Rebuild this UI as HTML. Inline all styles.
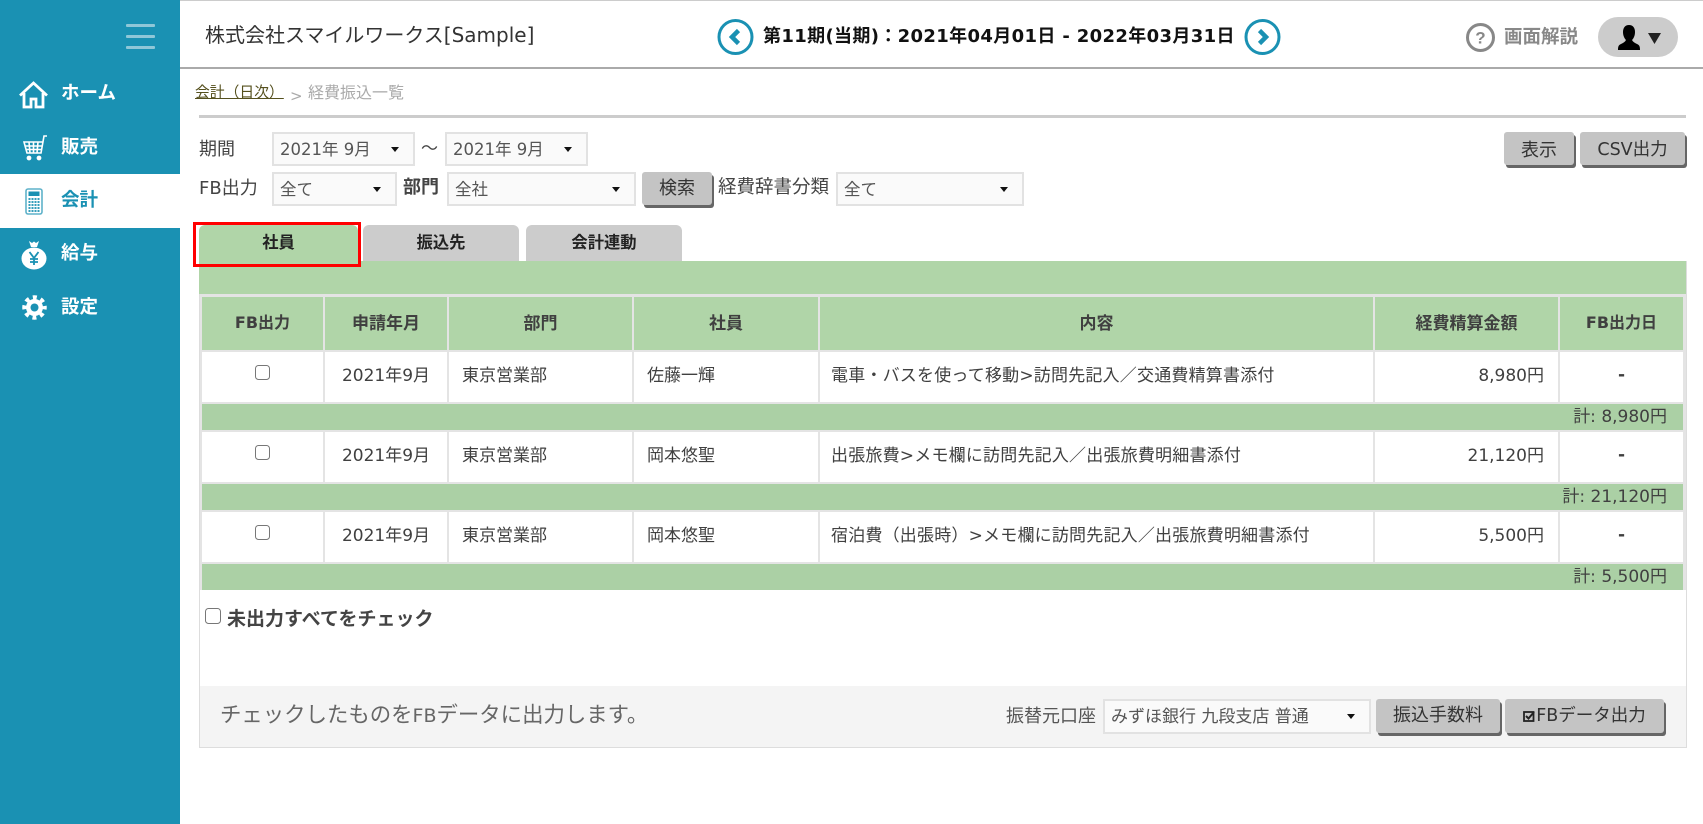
<!DOCTYPE html>
<html lang="ja"><head><meta charset="utf-8"><title>経費振込一覧</title>
<style>
*{box-sizing:border-box}
html,body{margin:0;padding:0;width:1703px;height:824px;overflow:hidden;background:#fff}
body{font-family:"DejaVu Sans","Noto Sans CJK JP",sans-serif;color:#444;position:relative;font-size:16px}
.a{position:absolute;white-space:nowrap}
.side{position:absolute;left:0;top:0;width:180px;height:824px;background:#1a91b3}
.nav{position:absolute;left:61px;font-weight:700;font-size:18.500px;line-height:26px;color:#fff}
.sel{position:absolute;background:#fafafa;border:2px solid #e2e2e2;color:#555;font-size:16.500px;padding-left:6px;white-space:nowrap;line-height:32px}
.sel:after{content:"";position:absolute;right:14px;top:13px;border:4px solid transparent;border-top:5px solid #111;border-bottom:0}
.btn{position:absolute;background:#c4c4c4;border-radius:3px;box-shadow:2px 3px 0 #666;color:#333;font-size:18px;text-align:center;white-space:nowrap;line-height:34px}
.tab{position:absolute;top:225px;height:36px;border-radius:6px 6px 0 0;background:#ccc;color:#222;font-weight:700;font-size:16.300px;text-align:center;line-height:36px}
table{border-collapse:separate;border-spacing:2px;table-layout:fixed;background:#e4e4e4;position:absolute;left:0;top:0;width:1485px}
td,th{padding:0;font-size:17px;background:#fff;color:#404040}
th{background:#b0d5a8;font-weight:700;height:53px;font-size:17px;padding-bottom:5px}
th.f{font-size:16px}
tr.r td{height:50px;padding-bottom:8px}
tr.r td.d{padding-bottom:4px}
tr.s td{height:26px;background:#abd0a5;text-align:right;padding-right:16px;font-size:17px;line-height:26px}
.c{text-align:center}.l{padding-left:13px}.lx{padding-left:11px;letter-spacing:.2px}.rt{text-align:right;padding-right:14px}
.d{font-weight:700}
.cb{display:inline-block;width:15px;height:15px;border:1.500px solid #777;border-radius:3.500px;background:#fff;vertical-align:middle}
tr.r .cb{position:relative;top:-1px}
</style></head><body>
<div class="a" style="left:0;top:0;width:1703px;height:1px;background:#ccc"></div>
<div class="side">
  <div style="position:absolute;left:126px;top:24px;width:29px;height:3px;background:#8fc7d8;border-radius:1px"></div>
  <div style="position:absolute;left:126px;top:35px;width:29px;height:3px;background:#8fc7d8;border-radius:1px"></div>
  <div style="position:absolute;left:126px;top:46px;width:29px;height:3px;background:#8fc7d8;border-radius:1px"></div>
  <div style="position:absolute;left:0;top:174px;width:180px;height:54px;background:#fff"></div>
  <div class="nav" style="top:81px">ホーム</div>
  <div class="nav" style="top:135px">販売</div>
  <div class="nav" style="top:188px;color:#1a91b3">会計</div>
  <div class="nav" style="top:241px">給与</div>
  <div class="nav" style="top:295px">設定</div>
  <svg style="position:absolute;left:18px;top:81px" width="31" height="28" viewBox="0 0 31 28" fill="none" stroke="#fff" stroke-width="2.800"><path d="M2 14.500 15.500 2 29 14.500M6 12v14h7v-8h5v8h7V12"/></svg>
  <svg style="position:absolute;left:21px;top:135px" width="27" height="26" viewBox="0 0 27 26" fill="none" stroke="#fff" stroke-width="1.600"><path d="M26 1h-3l-3 17H6L3 7h18.500M4 11h17M5 14.500h15.500M8 7l1 11M12.500 7v11M17 7l-1 11" /><circle cx="8" cy="23" r="1.600" fill="#fff"/><circle cx="18" cy="23" r="1.600" fill="#fff"/></svg>
  <svg style="position:absolute;left:25px;top:188px" width="18" height="27" viewBox="0 0 18 27"><rect x="1" y="1" width="16" height="25" rx="2" fill="#fff" stroke="#5fb2ca" stroke-width="1.600"/><rect x="3.500" y="3.500" width="11" height="4.500" fill="#1a91b3"/><path d="M3.500 11h11M3.500 14h11M3.500 17h11M3.500 20h11M3.500 23h11" stroke="#1a91b3" stroke-width="1.800" stroke-dasharray="2 1"/></svg>
  <svg style="position:absolute;left:21px;top:240px" width="26" height="30" viewBox="0 0 26 30"><path d="M8 1l3 2 2-1.500 2 1.500 3-2-2 6H10z" fill="#fff"/><ellipse cx="13" cy="18.500" rx="12.500" ry="11" fill="#fff"/><path d="M8.500 12 13 18l4.500-6M13 18v7M9 19h8M9 22h8" stroke="#1a91b3" stroke-width="1.800" fill="none"/></svg>
  <svg style="position:absolute;left:22px;top:295px" width="25" height="25" viewBox="0 0 25 25"><circle cx="12.500" cy="12.500" r="8.500" fill="#fff"/><circle cx="12.500" cy="12.500" r="10" fill="none" stroke="#fff" stroke-width="4.500" stroke-dasharray="3.930 3.930" stroke-dashoffset="2"/><circle cx="12.500" cy="12.500" r="4" fill="#1a91b3"/></svg>
</div>

<div class="a" style="left:180px;top:67px;width:1523px;height:2px;background:#aaa"></div>
<div class="a" style="left:205px;top:20px;font-size:20px;line-height:30px;color:#333">株式会社スマイルワークス[Sample]</div>

<svg style="position:absolute;left:717px;top:18px" width="37" height="38" viewBox="0 0 37 38" fill="none"><circle cx="18.500" cy="19" r="16.500" stroke="#1a91b3" stroke-width="3"/><path d="M21.500 12.500 15 19l6.500 6.500" stroke="#1a91b3" stroke-width="4.500"/></svg>
<div class="a" style="left:763px;top:23px;font-size:18px;font-weight:700;line-height:28px;color:#111;letter-spacing:.35px">第11期(当期)：2021年04月01日 - 2022年03月31日</div>
<svg style="position:absolute;left:1244px;top:18px" width="37" height="38" viewBox="0 0 37 38" fill="none"><circle cx="18.500" cy="19" r="16.500" stroke="#1a91b3" stroke-width="3"/><path d="M15.500 12.500 22 19l-6.500 6.500" stroke="#1a91b3" stroke-width="4.500"/></svg>

<svg style="position:absolute;left:1466px;top:23px" width="29" height="29" viewBox="0 0 29 29" fill="none"><circle cx="14.500" cy="14.500" r="13" stroke="#888" stroke-width="3"/><text x="14.500" y="20.500" text-anchor="middle" font-size="17" font-weight="700" fill="#888" font-family="Liberation Sans">?</text></svg>
<div class="a" style="left:1504px;top:24px;font-size:18.500px;font-weight:700;line-height:28px;color:#888">画面解説</div>
<div class="a" style="left:1598px;top:17px;width:80px;height:40px;border-radius:20px;background:#ccc"></div>
<svg style="position:absolute;left:1617px;top:24px" width="44" height="28" viewBox="0 0 44 28"><path d="M12 1c4 0 6 3 6 7 0 3-1 6-3 8 1 2 3 3 5 4 3 1 3 4 3 6H1c0-2 0-5 3-6 2-1 4-2 5-4-2-2-3-5-3-8 0-4 2-7 6-7z" fill="#000"/><path d="M31 9h13l-6.500 11z" fill="#222"/></svg>

<div class="a" style="left:195px;top:81px;font-size:14.800px;line-height:24px;color:#55501e;text-decoration:underline">会計（日次）</div>
<div class="a" style="left:290px;top:84px;font-size:15px;line-height:24px;color:#aaa">&gt;</div>
<div class="a" style="left:308px;top:81px;font-size:16px;line-height:24px;color:#aaa">経費振込一覧</div>
<div class="a" style="left:199px;top:115px;width:1487px;height:3px;background:#ccc"></div>

<div class="a" style="left:199px;top:137px;font-size:18px;line-height:26px">期間</div>
<div class="sel" style="left:272px;top:132px;width:143px;height:34px">2021年 9月</div>
<div class="a" style="left:421px;top:136px;font-size:17px;line-height:26px">～</div>
<div class="sel" style="left:445px;top:132px;width:143px;height:34px">2021年 9月</div>
<div class="a" style="left:199px;top:176px;font-size:18px;line-height:26px">FB出力</div>
<div class="sel" style="left:272px;top:172px;width:125px;height:34px">全て</div>
<div class="a" style="left:403px;top:175px;font-size:18px;font-weight:700;line-height:26px">部門</div>
<div class="sel" style="left:447px;top:172px;width:189px;height:34px">全社</div>
<div class="btn" style="left:642px;top:172px;width:70px;height:33px">検索</div>
<div class="a" style="left:718px;top:175px;font-size:18.500px;line-height:26px">経費辞書分類</div>
<div class="sel" style="left:836px;top:172px;width:188px;height:34px">全て</div>
<div class="btn" style="left:1504px;top:132px;width:70px;height:33px;line-height:37px">表示</div>
<div class="btn" style="left:1580px;top:132px;width:105px;height:33px;font-size:17.500px;line-height:37px">CSV出力</div>

<div class="a" style="left:199px;top:261px;width:1488px;height:487px;border:1px solid #ddd;border-top:0"></div>
<div class="tab" style="left:199px;width:159px;background:#b0d5a8">社員</div>
<div class="tab" style="left:363px;width:156px">振込先</div>
<div class="tab" style="left:526px;width:156px">会計連動</div>
<div class="a" style="left:199px;top:261px;width:1487px;height:33px;background:#b0d5a8"></div>
<div class="a" style="left:193px;top:222px;width:168px;height:45px;border:3px solid #f00"></div>
<div class="a" style="left:200px;top:294px;width:1486px;height:296px;overflow:hidden;background:#e4e4e4">
<table style="top:1px">
<colgroup><col style="width:121px"><col style="width:122px"><col style="width:183px"><col style="width:184px"><col style="width:553px"><col style="width:183px"><col style="width:123px"></colgroup>
<tr><th class="f">FB出力</th><th>申請年月</th><th>部門</th><th>社員</th><th>内容</th><th>経費精算金額</th><th class="f">FB出力日</th></tr>
<tr class="r"><td class="c"><span class="cb"></span></td><td class="c">2021年9月</td><td class="l">東京営業部</td><td class="l">佐藤一輝</td><td class="lx">電車・バスを使って移動&gt;訪問先記入／交通費精算書添付</td><td class="rt">8,980円</td><td class="c d">-</td></tr>
<tr class="s"><td colspan="7">計: 8,980円</td></tr>
<tr class="r"><td class="c"><span class="cb"></span></td><td class="c">2021年9月</td><td class="l">東京営業部</td><td class="l">岡本悠聖</td><td class="lx">出張旅費&gt;メモ欄に訪問先記入／出張旅費明細書添付</td><td class="rt">21,120円</td><td class="c d">-</td></tr>
<tr class="s"><td colspan="7">計: 21,120円</td></tr>
<tr class="r"><td class="c"><span class="cb"></span></td><td class="c">2021年9月</td><td class="l">東京営業部</td><td class="l">岡本悠聖</td><td class="lx">宿泊費（出張時）&gt;メモ欄に訪問先記入／出張旅費明細書添付</td><td class="rt">5,500円</td><td class="c d">-</td></tr>
<tr class="s"><td colspan="7">計: 5,500円</td></tr>
</table></div>
<div class="a" style="left:200px;top:590px;width:1486px;height:2px;background:#fff"></div>

<span class="cb" style="position:absolute;left:205px;top:608px;width:16px;height:16px"></span>
<div class="a" style="left:227px;top:604.500px;font-size:19px;font-weight:700;line-height:28px;color:#444">未出力すべてをチェック</div>

<div class="a" style="left:200px;top:686px;width:1486px;height:61px;background:#f4f4f4"></div>
<div class="a" style="left:220px;top:701px;font-size:21.400px;line-height:30px;color:#666">チェックしたものを<span style="font-size:19px">FB</span>データに出力します。</div>
<div class="a" style="left:1006px;top:703px;font-size:18px;line-height:28px;color:#555">振替元口座</div>
<div class="sel" style="left:1103px;top:699px;width:268px;height:35px;font-size:17px">みずほ銀行 九段支店 普通</div>
<div class="btn" style="left:1376px;top:699px;width:124px;height:34px">振込手数料</div>
<div class="btn" style="left:1505px;top:699px;width:159px;height:34px;font-size:17.500px"><svg width="12" height="12" viewBox="0 0 12 12" style="vertical-align:-1px;margin-right:1px"><rect x="1" y="2" width="9.500" height="9" fill="none" stroke="#222" stroke-width="1.800"/><path d="M3 6l2.500 2.500L11 2" fill="none" stroke="#222" stroke-width="2"/></svg>FBデータ出力</div>
</body></html>
